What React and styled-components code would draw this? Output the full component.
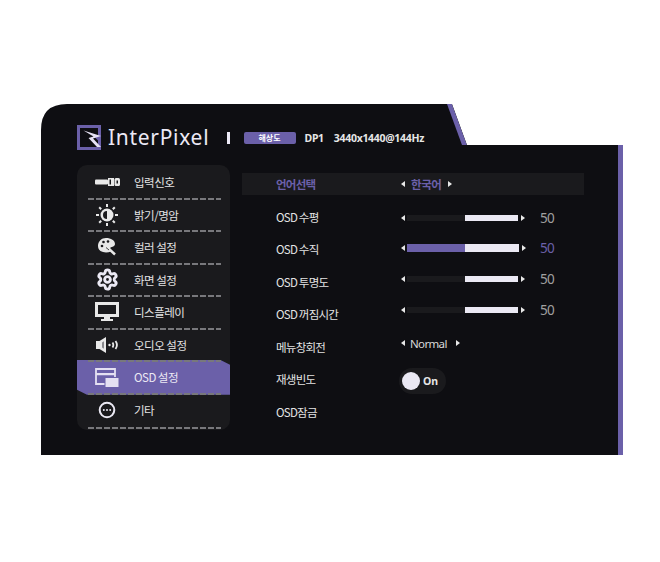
import React from "react";
import styled, { createGlobalStyle } from "styled-components";
import { Settings } from "lucide-react";

const GlobalStyle = createGlobalStyle`
  body {
    margin: 0;
    background: #fff;
    font-family: "Noto Sans CJK KR", "Noto Sans", sans-serif;
  }
`;

const PURPLE = "#6b60a9";
const DARK = "#0e0e12";
const GREY = "#1a1a1d";
const LIGHT = "#ebe9f4";

const CableIcon = () => (
  <svg width="25" height="8" viewBox="0 0 25 8">
    <rect x="0" y="1.500" width="13" height="5" rx="1" fill="#e8e8e8" />
    <rect x="13" y="0" width="6" height="8" fill="#e8e8e8" />
    <rect x="14.500" y="1.500" width="1.500" height="5" fill="#1a1a1d" />
    <rect x="19.500" y="0" width="5.500" height="8" rx="1.500" fill="#e8e8e8" />
    <rect x="21.500" y="2.500" width="1.500" height="3" fill="#1a1a1d" />
  </svg>
);

const SunIcon = () => (
  <svg width="24" height="24" viewBox="0 0 24 24">
    <circle cx="12" cy="12" r="6.500" fill="#e8e8e8" />
    <path d="M12 8a4 4 0 0 0 0 8z" fill="#1a1a1d" />
    <g stroke="#e8e8e8" strokeWidth="2">
      <path d="M12 1v3M12 20v3M1 12h3M20 12h3M4.200 4.200l2 2M17.800 17.800l2 2M4.200 19.800l2-2M17.800 6.200l2-2" />
    </g>
  </svg>
);

const PaletteIcon = () => (
  <svg width="20" height="20" viewBox="0 0 20 20">
    <path d="M9 1c5 0 9 2.500 9 6 0 2.500-3 3-4.500 3.500l-.5 1.500 1 2.500C9 16.500 1 15.500 1 9c0-4.500 3.500-8 8-8z" fill="#e8e8e8" />
    <circle cx="5" cy="9" r="1.300" fill="#1a1a1d" />
    <circle cx="6.500" cy="5" r="1.300" fill="#1a1a1d" />
    <circle cx="11" cy="4.500" r="1.300" fill="#1a1a1d" />
    <path d="M10 10l8 7.500" stroke="#e8e8e8" strokeWidth="2.400" />
    <path d="M9 10.500l3 2.500" stroke="#1a1a1d" strokeWidth="0.800" />
  </svg>
);

const MonitorIcon = () => (
  <svg width="24" height="20" viewBox="0 0 24 20">
    <path d="M0 0h24v15H0z" fill="#e8e8e8" />
    <path d="M3 3h18v9H3z" fill="#1a1a1d" />
    <path d="M9 15h6v2h3v2H6v-2h3z" fill="#e8e8e8" />
  </svg>
);

const SpeakerIcon = () => (
  <svg width="22" height="16" viewBox="0 0 22 16">
    <path d="M0 4h3.500v8H0zM3.500 4L10 0v16l-6.500-4z" fill="#e8e8e8" />
    <path d="M6 5.500l2-1.200v7.400l-2-1.200z" fill="#88888c" />
    <circle cx="13.500" cy="8" r="1.200" fill="#e8e8e8" />
    <path d="M16.500 5.500c1 1.500 1 3.500 0 5M19.500 4c1.800 2.500 1.800 5.500 0 8" stroke="#e8e8e8" strokeWidth="1.800" fill="none" />
  </svg>
);

const WindowsIcon = () => (
  <svg width="24" height="19" viewBox="0 0 24 19">
    <path d="M1 1h19v15H1z" stroke="#e4e0f2" strokeWidth="1.800" fill="none" />
    <path d="M1 5h19v2.200H1z" fill="#e4e0f2" />
    <path d="M9.500 9H24v10H9.500z" fill={PURPLE} />
    <path d="M10.500 10H23.500v9H10.500z" fill="#e4e0f2" />
  </svg>
);

const DotsIcon = () => (
  <svg width="18" height="18" viewBox="0 0 18 18">
    <circle cx="9" cy="9" r="7.300" stroke="#ebe9f4" strokeWidth="2" fill="none" />
    <circle cx="5.800" cy="9" r="1" fill="#ebe9f4" />
    <circle cx="9" cy="9" r="1" fill="#ebe9f4" />
    <circle cx="12.200" cy="9" r="1" fill="#ebe9f4" />
  </svg>
);

const LogoMark = () => (
  <svg width="24" height="25" viewBox="0 0 24 25">
    <path d="M0 0h24v25H0z" fill={PURPLE} />
    <path d="M3 3h18v7l-3 2.500 3 3V22H3z" fill={DARK} />
    <path d="M6.500 5.500L24 11l-8 2.500 8 8.500h-4l-8.500-9 5-1.500z" fill="#e6e2f4" />
  </svg>
);

const menu = [
  { label: "입력신호", icon: <CableIcon /> },
  { label: "밝기/명암", icon: <SunIcon /> },
  { label: "컬러 설정", icon: <PaletteIcon /> },
  { label: "화면 설정", icon: <Settings size={23} strokeWidth={3} /> },
  { label: "디스플레이", icon: <MonitorIcon /> },
  { label: "오디오 설정", icon: <SpeakerIcon /> },
  { label: "OSD 설정", icon: <WindowsIcon />, active: true },
  { label: "기타", icon: <DotsIcon />, last: true },
];

const Left = () => (
  <svg width="4" height="6" viewBox="0 0 4 6"><path d="M4 0v6L0 3z" fill="#e8e8e8" /></svg>
);
const Right = () => (
  <svg width="4" height="6" viewBox="0 0 4 6"><path d="M0 0v6l4-3z" fill="#e8e8e8" /></svg>
);

const Slider = ({ active, up }) => (
  <SliderWrap $up={up}>
    <Left />
    <Track $active={active}>
      <TrackFill $active={active} style={{ width: "52%" }} />
    </Track>
    <Right />
    <SliderValue $active={active}>50</SliderValue>
  </SliderWrap>
);

const App = () => (
  <>
    <GlobalStyle />
    <Shell>
      <Header>
        <LogoMark />
        <Brand>InterPixel</Brand>
        <Bar />
        <Badge>해상도</Badge>
        <Source>DP1</Source>
        <Source>3440x1440@144Hz</Source>
      </Header>
      <Body>
        <Sidebar>
          {menu.map((m) => (
            <React.Fragment key={m.label}>
              <MenuItem $active={m.active} $last={m.last}>
                <IconSlot>{m.icon}</IconSlot>
                <MenuLabel>{m.label}</MenuLabel>
              </MenuItem>
              <Divider />
            </React.Fragment>
          ))}
        </Sidebar>
        <Content>
          <SelectedRow>
            <SelectedLabel>언어선택</SelectedLabel>
            <Picker>
              <Left />
              <SelectedValue>한국어</SelectedValue>
              <Right />
            </Picker>
          </SelectedRow>
          <Row>
            <RowLabel>OSD 수평</RowLabel>
            <Slider up={-1.5} />
          </Row>
          <Row>
            <RowLabel>OSD 수직</RowLabel>
            <Slider active up={1} />
          </Row>
          <Row>
            <RowLabel>OSD 투명도</RowLabel>
            <Slider up={2.5} />
          </Row>
          <Row>
            <RowLabel>OSD 꺼짐시간</RowLabel>
            <Slider up={4} />
          </Row>
          <Row>
            <RowLabel>메뉴창회전</RowLabel>
            <Picker $up={3.5}>
              <Left />
              <PickerValue>Normal</PickerValue>
              <Right />
            </Picker>
          </Row>
          <Row>
            <RowLabel>재생빈도</RowLabel>
            <Toggle>
              <Knob />
              <ToggleText>On</ToggleText>
            </Toggle>
          </Row>
          <Row>
            <RowLabel>OSD잠금</RowLabel>
          </Row>
        </Content>
      </Body>
    </Shell>
  </>
);

export default App;

const Shell = styled.div`
  position: relative;
  box-sizing: border-box;
  width: 582px;
  height: 351px;
  margin: 104px 0 0 41px;
  background: ${DARK};
  border-right: 5px solid ${PURPLE};
  clip-path: path("M0 351 L0 26 Q0 0 26 0 L411 0 L426 41 L582 41 L582 351 Z");

  &::before {
    content: "";
    position: absolute;
    left: 406px;
    top: 0;
    width: 20px;
    height: 41px;
    background: ${PURPLE};
    clip-path: polygon(0 0, 5px 0, 20px 41px, 15px 41px);
  }
`;

const Header = styled.div`
  display: flex;
  align-items: center;
  height: 61px;
  padding: 6px 0 0 36px;
  box-sizing: border-box;
`;

const Brand = styled.span`
  margin-left: 7px;
  width: 102px;
  font-family: "Noto Sans", sans-serif;
  font-size: 21px;
  font-weight: 400;
  letter-spacing: 0.700px;
  line-height: 25px;
  white-space: nowrap;
  color: #ece9f6;
`;

const Bar = styled.span`
  width: 2.500px;
  height: 12px;
  margin-left: 17px;
  background: #ece9f6;
`;

const Badge = styled.span`
  width: 52px;
  height: 12px;
  margin-left: 14px;
  border-radius: 2px;
  background: ${PURPLE};
  color: #fff;
  font-size: 8px;
  font-weight: 700;
  line-height: 12px;
  text-align: center;
`;

const Source = styled.span`
  margin-left: 9px;
  font-family: "Noto Sans", sans-serif;
  font-size: 10.500px;
  font-weight: 700;
  letter-spacing: -0.300px;
  color: #e6e6e6;

  & + & {
    margin-left: 10px;
  }
`;

const Body = styled.div`
  display: flex;
  align-items: flex-start;
  padding-left: 36px;
`;

const Sidebar = styled.div`
  width: 153px;
  height: 265px;
  padding-top: 2px;
  box-sizing: border-box;
  border-radius: 10px;
  background: ${GREY};
`;

const MenuItem = styled.div`
  display: flex;
  align-items: center;
  box-sizing: border-box;
  height: 30.500px;
  color: ${({ $active }) => ($active ? "#ebe9f4" : "#e3e3e3")};
  background: ${({ $active }) => ($active ? PURPLE : "transparent")};
  clip-path: ${({ $active }) =>
    $active
      ? "polygon(0 0, 143px 0, 100% 5px, 100% 100%, 10px 100%, 0 calc(100% - 5px))"
      : "none"};
  ${({ $active }) => $active && "height: 35px; margin: -2.250px 0;"}
  ${({ $last }) => $last && "height: 32.500px; padding-bottom: 2px;"}
`;

const IconSlot = styled.span`
  display: flex;
  justify-content: center;
  align-items: center;
  width: 60px;
  color: #ebe9f4;
`;

const MenuLabel = styled.span`
  margin-left: -3px;
  font-size: 11.500px;
  letter-spacing: -0.500px;
`;

const Divider = styled.div`
  position: relative;
  z-index: 1;
  height: 2px;
  background: repeating-linear-gradient(90deg, #78787c 0 6px, transparent 6px 8px);
  margin: 0 9px 0 11px;
`;

const Content = styled.div`
  width: 342px;
  margin: 8px 0 0 12px;
`;

const Row = styled.div`
  display: flex;
  align-items: center;
  height: 32.500px;
`;

const SelectedRow = styled(Row)`
  height: 22px;
  margin-bottom: 5.500px;
  background: ${GREY};
`;

const RowLabel = styled.span`
  width: 124px;
  margin-left: 34px;
  font-size: 11.500px;
  letter-spacing: -0.750px;
  color: #e3e3e3;
`;

const SelectedLabel = styled(RowLabel)`
  font-weight: 700;
  color: ${PURPLE};
`;

const Picker = styled.div`
  display: flex;
  align-items: center;
  gap: 6px;
  margin-left: 1px;
  margin-bottom: ${({ $up = 0 }) => $up * 2}px;
`;

const SelectedValue = styled.span`
  font-size: 11.500px;
  font-weight: 700;
  letter-spacing: -0.400px;
  color: ${PURPLE};
`;

const PickerValue = styled.span`
  margin: 0 3px 0 -1px;
  font-family: "Noto Sans", sans-serif;
  font-size: 11.500px;
  letter-spacing: -0.650px;
  color: #d8d8d8;
`;

const SliderWrap = styled.div`
  display: flex;
  align-items: center;
  margin-left: 1px;
  margin-bottom: ${({ $up }) => $up * 2}px;
`;

const Track = styled.div`
  width: ${({ $active }) => ($active ? 112 : 111)}px;
  height: ${({ $active }) => ($active ? 8 : 6)}px;
  margin: 0 ${({ $active }) => ($active ? 2.500 : 3)}px 0 2px;
  background: ${LIGHT};
`;

const TrackFill = styled.div`
  height: 100%;
  background: ${({ $active }) => ($active ? PURPLE : GREY)};
`;

const SliderValue = styled.span`
  margin-left: ${({ $active }) => ($active ? 14.500 : 15)}px;
  font-family: "Noto Sans", sans-serif;
  font-size: 13.500px;
  letter-spacing: -0.800px;
  color: ${({ $active }) => ($active ? PURPLE : "#a0a0a0")};
`;

const Toggle = styled.div`
  display: flex;
  align-items: center;
  width: 47px;
  height: 26px;
  margin-left: -1px;
  margin-bottom: -4px;
  padding-left: 3px;
  box-sizing: border-box;
  border-radius: 13px;
  background: #1a1a1d;
`;

const Knob = styled.span`
  width: 18px;
  height: 18px;
  border-radius: 50%;
  background: ${LIGHT};
`;

const ToggleText = styled.span`
  margin-left: 3px;
  font-family: "Noto Sans", sans-serif;
  font-size: 10.500px;
  font-weight: 700;
  color: #e6e6e6;
`;
